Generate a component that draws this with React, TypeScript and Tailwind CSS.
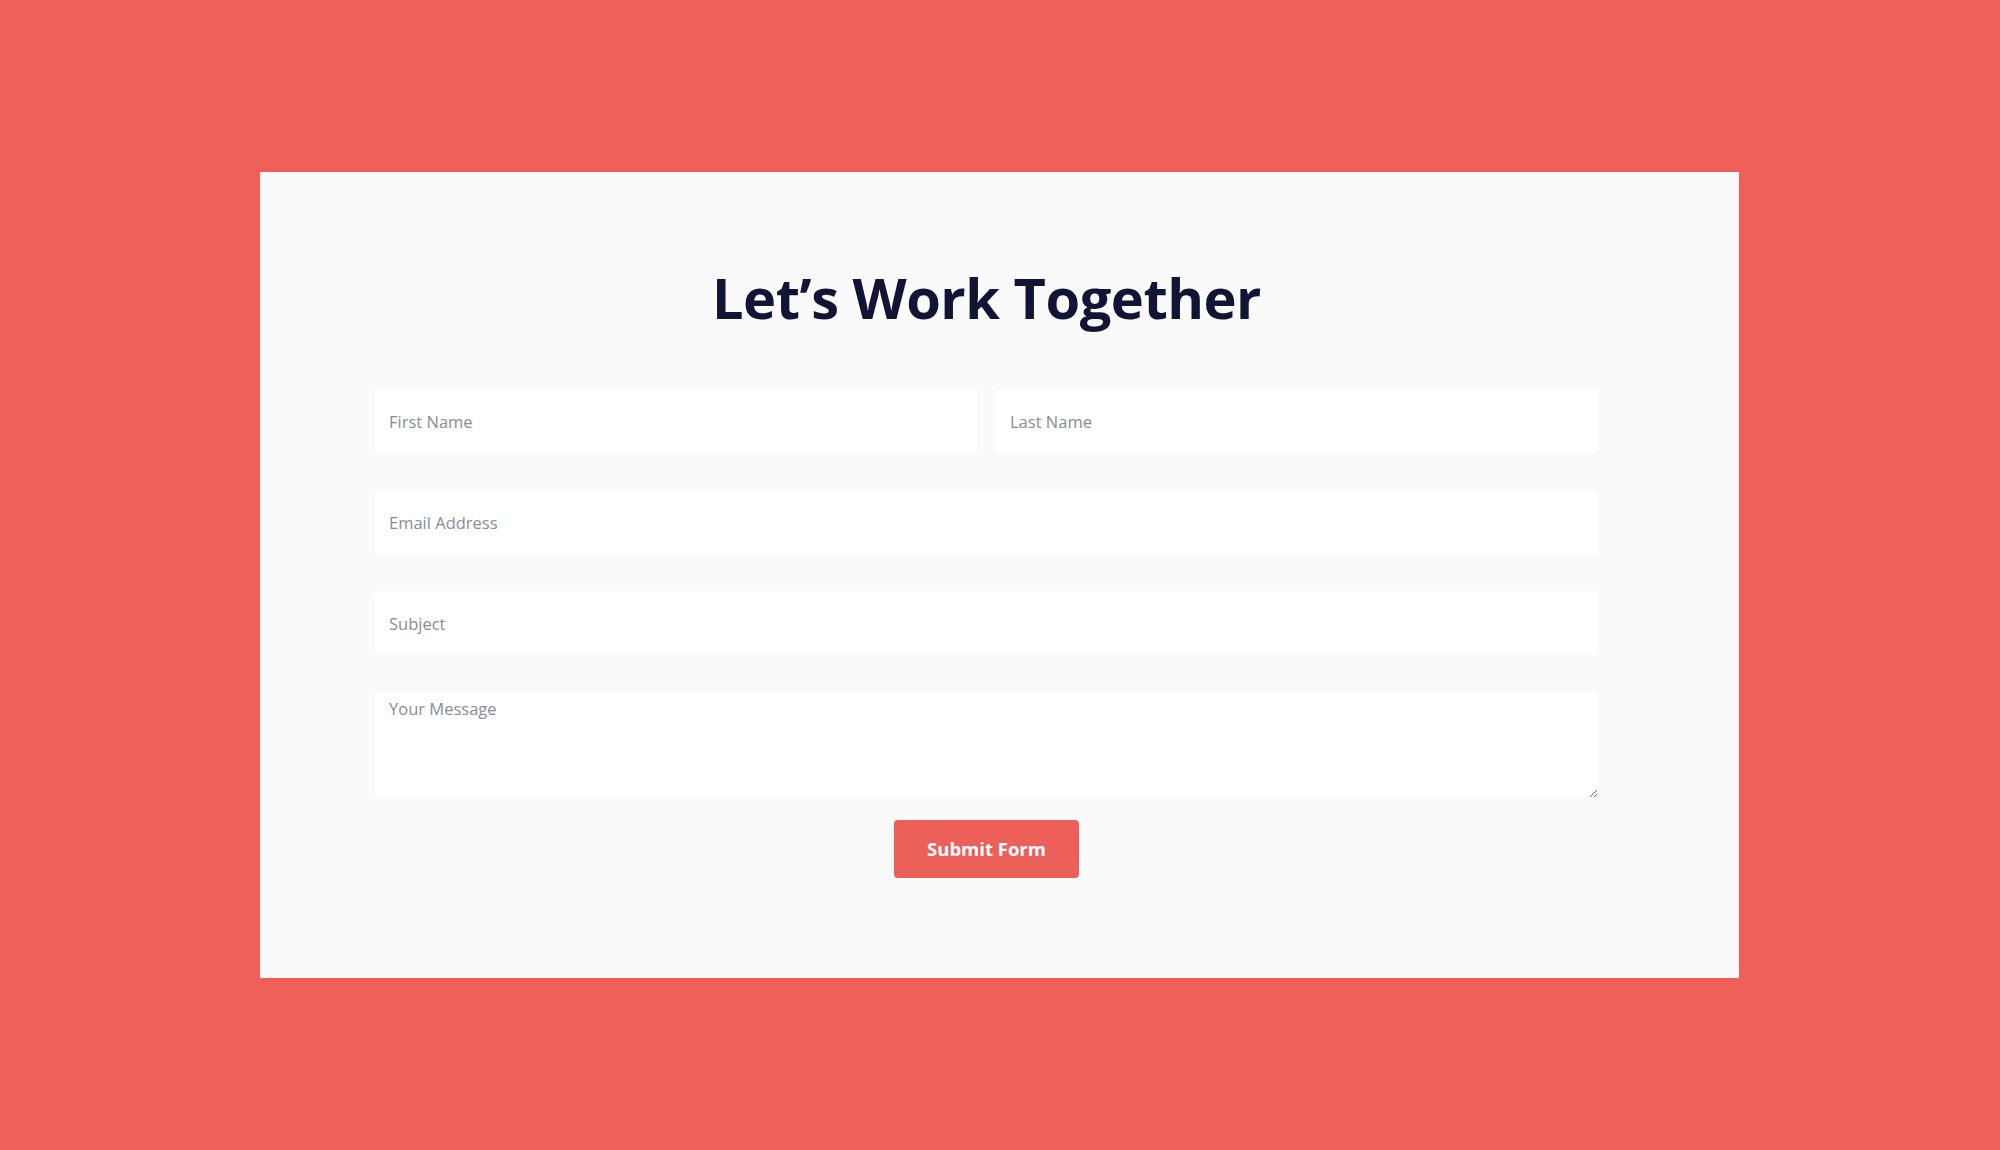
import { useState } from 'react';

const field =
  'h-[64px] w-full rounded-[4px] bg-white px-[14px] text-[16.5px] text-[#3a3d4a] outline-none placeholder:text-[#878c96]';

export default function App() {
  const [form, setForm] = useState({ first: '', last: '', email: '', subject: '', message: '' });
  const set = (k: keyof typeof form) => (e: { target: { value: string } }) =>
    setForm({ ...form, [k]: e.target.value });

  return (
    <div
      className="min-h-[1150px] w-full bg-[#ef6058] pt-[172px] pl-[260px]"
      style={{ fontFamily: '"Open Sans", "Noto Sans", sans-serif' }}
    >
      <div className="flex h-[806px] w-[1479px] flex-col bg-[#fafafa] pt-[89px] pl-[115px] pr-[141px]">
        <h1 className="text-center text-[56px] font-bold leading-[72px] tracking-[-0.5px] text-[#121436]">
          Let’s Work Together
        </h1>

        <form className="mt-[56px] flex flex-col" onSubmit={(e) => e.preventDefault()}>
          <div className="grid grid-cols-2 gap-[19px]">
            <input className={field} placeholder="First Name" value={form.first} onChange={set('first')} />
            <input className={field} placeholder="Last Name" value={form.last} onChange={set('last')} />
          </div>
          <input
            className={`${field} mt-[37px]`}
            placeholder="Email Address"
            value={form.email}
            onChange={set('email')}
          />
          <input
            className={`${field} mt-[37px]`}
            placeholder="Subject"
            value={form.subject}
            onChange={set('subject')}
          />
          <textarea
            className="mt-[37px] h-[106px] w-full rounded-[4px] bg-white px-[14px] pt-[5px] text-[16.5px] text-[#3a3d4a] outline-none placeholder:text-[#878c96]"
            placeholder="Your Message"
            value={form.message}
            onChange={set('message')}
          />
          <div className="mt-[22px] flex justify-center">
            <button
              type="submit"
              className="h-[58px] w-[185px] rounded-[4px] bg-[#ed5f59] text-[18.5px] font-bold text-white"
            >
              Submit Form
            </button>
          </div>
        </form>
      </div>
    </div>
  );
}
